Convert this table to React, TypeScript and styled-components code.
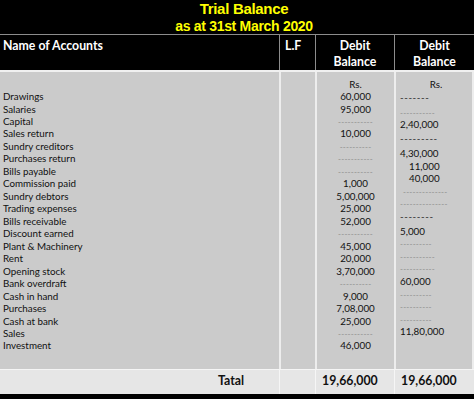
import React from 'react';
import styled, { createGlobalStyle } from 'styled-components';

const LINE = 12.47;

const GlobalStyle = createGlobalStyle`
  html, body {
    margin: 0;
    padding: 0;
    background: #000;
  }
  body {
    width: 474px;
    height: 399px;
    overflow: hidden;
    font-family: Lato, "Open Sans", sans-serif;
  }
`;

const Sheet = styled.div`
  width: 474px;
  height: 399px;
  background: #000;
  display: flex;
  flex-direction: column;
`;

const Title = styled.div`
  height: 34px;
  box-sizing: border-box;
  padding: 1px 0 0 14px;
  display: flex;
  flex-direction: column;
  align-items: center;
  color: #ffff00;
  font-family: "Liberation Sans", Arial, sans-serif;
  font-weight: 700;
  letter-spacing: -0.3px;
`;

const TitleLine = styled.div<{ $size: number }>`
  font-size: ${p => p.$size}px;
  line-height: 16.5px;
  white-space: nowrap;
`;

const Grid = styled.div`
  display: grid;
  grid-template-columns: 279px 36px 79px 1fr;
`;

const HeadRow = styled(Grid)`
  height: 38px;
  box-sizing: border-box;
  border-top: 1px solid #8c8c8c;
  border-bottom: 2px solid #f0f0f0;
  color: #fff;
  font-weight: 700;
  font-size: 12.3px;
  line-height: 15.6px;
`;

const HeadCell = styled.div<{ $align?: string; $first?: boolean }>`
  padding: 3px ${p => (p.$first ? 3 : 5)}px 0;
  text-align: ${p => p.$align || 'left'};
  border-left: ${p => (p.$first ? 'none' : '1px solid #8c8c8c')};
`;

const Body = styled(Grid)`
  height: 297px;
  background: #cbcbcb;
  border-right: 2px solid #ededed;
  color: #111;
  font-size: 9.8px;
  line-height: ${LINE}px;
`;

const Col = styled.div<{ $align?: string; $first?: boolean; $pad?: number }>`
  display: flex;
  flex-direction: column;
  align-items: ${p => p.$align || 'flex-start'};
  padding: 5.6px 0 0 ${p => p.$pad ?? 0}px;
  border-left: ${p => (p.$first ? 'none' : '2px solid #ededed')};
  white-space: nowrap;
`;

const Line = styled.div<{ $gap?: number; $indent?: number }>`
  height: ${LINE}px;
  margin-top: ${p => p.$gap ?? 0}px;
  margin-left: ${p => p.$indent ?? 0}px;
`;

const Dash = styled.span<{ $dark?: boolean }>`
  font-size: ${p => (p.$dark ? 9.7 : 8)}px;
  letter-spacing: ${p => (p.$dark ? 0.6 : 0.2)}px;
  color: ${p => (p.$dark ? '#2a2a2a' : '#8a8a8a')};
`;

const RsCenter = styled.div`
  align-self: center;
  height: ${LINE}px;
`;

const TotalRow = styled(Grid)`
  height: 25px;
  box-sizing: border-box;
  background: #e6e6e6;
  border-top: 1px solid #f5f5f5;
  font-weight: 700;
  font-size: 12.3px;
  line-height: 22px;
  color: #111;
`;

const TotalCell = styled.div<{ $right?: boolean; $first?: boolean }>`
  text-align: ${p => (p.$right ? 'right' : 'left')};
  padding: ${p => (p.$right ? '0 35px 0 0' : '0 0 0 6px')};
  border-left: ${p => (p.$first ? 'none' : '1px solid #f6f6f6')};
`;

// a run of hyphens about w pixels wide
const blank = (w: number, dark?: boolean) =>
  '-'.repeat(Math.round(w / (dark ? 4.1 : 2.5)));

const names = [
  'Drawings', 'Salaries', 'Capital', 'Sales return', 'Sundry creditors',
  'Purchases return', 'Bills payable', 'Commission paid', 'Sundry debtors',
  'Trading expenses', 'Bills receivable', 'Discount earned', 'Plant & Machinery',
  'Rent', 'Opening stock', 'Bank overdraft', 'Cash in hand', 'Purchases',
  'Cash at bank', 'Sales', 'Investment',
];

// number = width of a dashed blank
const debit: (string | number)[] = [
  '60,000', '95,000', 28, '10,000', 25, 28, 27, '1,000', '5,00,000', '25,000',
  '52,000', 28, '45,000', '20,000', '3,70,000', 26, '9,000', '7,08,000',
  '25,000', 28, '46,000',
];

// second balance column is typed freely, so each entry keeps its own height
type Item = { y: number; text?: string; w?: number; dark?: boolean; x?: number };
const credit: Item[] = [
  { y: 98, w: 29, dark: true },
  { y: 113, w: 28 },
  { y: 125.7, text: '2,40,000' },
  { y: 139, w: 37, dark: true },
  { y: 154.3, text: '4,30,000' },
  { y: 166.7, text: '11,000', x: 9 },
  { y: 179.3, text: '40,000', x: 9 },
  { y: 191.3, w: 34, x: 3 },
  { y: 203, w: 38 },
  { y: 217.3, w: 33, dark: true },
  { y: 232.3, text: '5,000' },
  { y: 244.7, w: 25 },
  { y: 257.3, w: 28 },
  { y: 269.7, w: 28 },
  { y: 282.7, text: '60,000' },
  { y: 295, w: 25 },
  { y: 307.3, w: 25 },
  { y: 319.7, w: 25 },
  { y: 332.7, text: '11,80,000' },
];

export default function App() {
  let prev = 84.8;
  return (
    <Sheet>
      <GlobalStyle />
      <Title>
        <TitleLine $size={15}>Trial Balance</TitleLine>
        <TitleLine $size={14}>as at 31st March 2020</TitleLine>
      </Title>
      <HeadRow>
        <HeadCell $first>Name of Accounts</HeadCell>
        <HeadCell>L.F</HeadCell>
        <HeadCell $align="center">Debit<br />Balance</HeadCell>
        <HeadCell $align="center">Debit<br />Balance</HeadCell>
      </HeadRow>
      <Body>
        <Col $first $pad={3}>
          <Line />
          {names.map(n => <Line key={n}>{n}</Line>)}
        </Col>
        <Col />
        <Col $align="center">
          <Line>Rs.</Line>
          {debit.map((d, i) => (
            <Line key={i}>
              {typeof d === 'number' ? <Dash>{blank(d)}</Dash> : d}
            </Line>
          ))}
        </Col>
        <Col $pad={4}>
          <RsCenter>Rs.</RsCenter>
          {credit.map((c, i) => {
            const gap = Math.max(0, c.y - prev - LINE);
            prev = Math.max(c.y, prev + LINE);
            return (
              <Line key={i} $gap={gap} $indent={c.x}>
                {c.text ?? <Dash $dark={c.dark}>{blank(c.w!, c.dark)}</Dash>}
              </Line>
            );
          })}
        </Col>
      </Body>
      <TotalRow>
        <TotalCell $first $right>Tatal</TotalCell>
        <TotalCell />
        <TotalCell>19,66,000</TotalCell>
        <TotalCell>19,66,000</TotalCell>
      </TotalRow>
    </Sheet>
  );
}
